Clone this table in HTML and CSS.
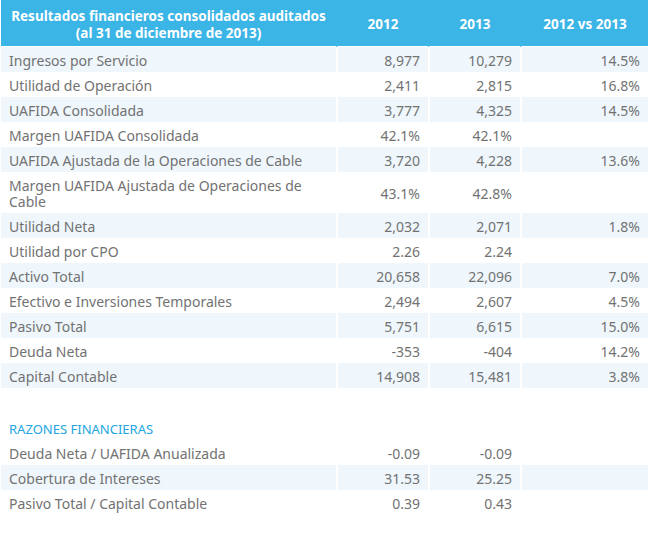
FILE: index.html
```html
<!DOCTYPE html>
<html lang="es">
<head>
<meta charset="utf-8">
<title>Resultados financieros</title>
<link rel="stylesheet" href="styles.css">
</head>
<body>
<div class="wrap">
<table class="fin">
  <colgroup>
    <col class="c-label">
    <col class="c-num">
    <col class="c-num">
    <col class="c-var">
  </colgroup>
  <thead>
    <tr>
      <th class="h-title">Resultados financieros consolidados auditados<br>(al 31 de diciembre de 2013)</th>
      <th>2012</th>
      <th>2013</th>
      <th>2012 vs 2013</th>
    </tr>
  </thead>
  <tbody>
    <tr class="alt"><td>Ingresos por Servicio</td><td>8,977</td><td>10,279</td><td>14.5%</td></tr>
    <tr><td>Utilidad de Operación</td><td>2,411</td><td>2,815</td><td>16.8%</td></tr>
    <tr class="alt"><td>UAFIDA Consolidada</td><td>3,777</td><td>4,325</td><td>14.5%</td></tr>
    <tr><td>Margen UAFIDA Consolidada</td><td>42.1%</td><td>42.1%</td><td></td></tr>
    <tr class="alt"><td>UAFIDA Ajustada de la Operaciones de Cable</td><td>3,720</td><td>4,228</td><td>13.6%</td></tr>
    <tr><td>Margen UAFIDA Ajustada de Operaciones de Cable</td><td>43.1%</td><td>42.8%</td><td></td></tr>
    <tr class="alt"><td>Utilidad Neta</td><td>2,032</td><td>2,071</td><td>1.8%</td></tr>
    <tr><td>Utilidad por CPO</td><td>2.26</td><td>2.24</td><td></td></tr>
    <tr class="alt"><td>Activo Total</td><td>20,658</td><td>22,096</td><td>7.0%</td></tr>
    <tr><td>Efectivo e Inversiones Temporales</td><td>2,494</td><td>2,607</td><td>4.5%</td></tr>
    <tr class="alt"><td>Pasivo Total</td><td>5,751</td><td>6,615</td><td>15.0%</td></tr>
    <tr><td>Deuda Neta</td><td>-353</td><td>-404</td><td>14.2%</td></tr>
    <tr class="alt"><td>Capital Contable</td><td>14,908</td><td>15,481</td><td>3.8%</td></tr>
  </tbody>
  <tbody>
    <tr class="spacer"><td></td><td></td><td></td><td></td></tr>
    <tr class="section"><td>RAZONES FINANCIERAS</td><td></td><td></td><td></td></tr>
    <tr><td>Deuda Neta / UAFIDA Anualizada</td><td>-0.09</td><td>-0.09</td><td></td></tr>
    <tr class="alt"><td>Cobertura de Intereses</td><td>31.53</td><td>25.25</td><td></td></tr>
    <tr><td>Pasivo Total / Capital Contable</td><td>0.39</td><td>0.43</td><td></td></tr>
  </tbody>
</table>
</div>
</body>
</html>
```

FILE: styles.css
```css
html, body {
  margin: 0;
  padding: 0;
  background: #ffffff;
}

.wrap {
  padding-left: 1px;
}

.fin {
  width: 647px;
  table-layout: fixed;
  border-collapse: separate;
  border-spacing: 0;
  font-family: "Noto Sans", "Liberation Sans", sans-serif;
  font-size: 14px;
  line-height: 16px;
  color: #727272;
}

.c-label { width: 335px; }
.c-num { width: 92px; }
.c-var { width: 128px; }

.fin thead th {
  background: #3bb4e6;
  color: #ffffff;
  font-weight: 700;
  font-size: 13.5px;
  height: 47px;
  padding: 2px 4px 0 4px;
  text-align: center;
  vertical-align: middle;
  border-left: 2px solid #3bb4e6;
  border-bottom: 1px solid #ffffff;
  box-sizing: border-box;
}

.fin thead th.h-title {
  border-left: 0;
  line-height: 17px;
  padding-top: 3px;
}

.fin td {
  padding: 6px 8px 3px 8px;
  text-align: right;
  vertical-align: middle;
  border-left: 2px solid #ffffff;
}

.fin td:first-child {
  text-align: left;
  border-left: 0;
  padding-right: 20px;
}

.fin tr.alt td {
  background: #eff7fd;
}

.fin tr.spacer td {
  height: 27px;
  padding: 0;
}

.fin tr.section td:first-child {
  color: #23a6df;
  font-size: 13px;
}
```
